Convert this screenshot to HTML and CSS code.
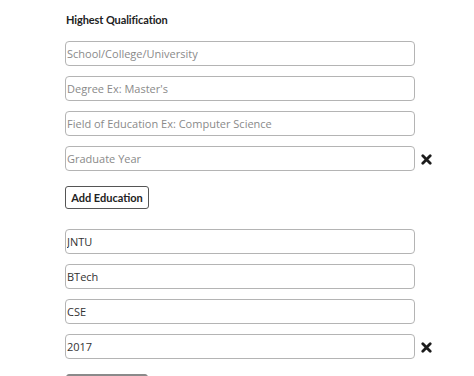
FILE: index.html
```html
<!DOCTYPE html>
<html>
<head>
<meta charset="utf-8">
<link rel="stylesheet" href="styles.css">
</head>
<body>
<div class="form">
  <h3 class="title">Highest Qualification</h3>
  <div class="group">
    <div class="row"><input class="field" placeholder="School/College/University"></div>
    <div class="row"><input class="field" placeholder="Degree Ex: Master's"></div>
    <div class="row"><input class="field" placeholder="Field of Education Ex: Computer Science"></div>
    <div class="row"><input class="field" placeholder="Graduate Year"><span class="remove"><svg width="11" height="11" viewBox="0 0 11 11"><path d="M1.8 1.8L9.2 9.2M9.2 1.8L1.8 9.2" stroke="#1c1c1c" stroke-width="2.8" stroke-linecap="round"/></svg></span></div>
  </div>
  <button class="btn">Add Education</button>
  <div class="group second">
    <div class="row"><input class="field" value="JNTU"></div>
    <div class="row"><input class="field" value="BTech"></div>
    <div class="row"><input class="field" value="CSE"></div>
    <div class="row"><input class="field" value="2017"><span class="remove"><svg width="11" height="11" viewBox="0 0 11 11"><path d="M1.8 1.8L9.2 9.2M9.2 1.8L1.8 9.2" stroke="#1c1c1c" stroke-width="2.8" stroke-linecap="round"/></svg></span></div>
  </div>
  <button class="btn gray" aria-label="Save"></button>
</div>
</body>
</html>
```
FILE: styles.css
```css
html, body { margin: 0; padding: 0; background: #fff; }
body { overflow: hidden; }
.form { padding: 13px 0 0 65px; display: flex; flex-direction: column; align-items: flex-start; }
.title { margin: 0 0 14px 1px; font-family: "Lato", "Noto Sans", sans-serif; font-weight: 700; font-size: 11px; line-height: 14px; color: #222; letter-spacing: -0.1px; }
.group { display: flex; flex-direction: column; gap: 10px; }
.group.second { margin-top: 20px; }
.row { display: flex; align-items: center; }
.field { box-sizing: border-box; width: 350px; height: 25px; margin: 0; border: 1px solid #b4b4b4; border-radius: 4px; padding: 0 1px; font-family: "Open Sans", "Noto Sans", sans-serif; font-size: 11px; color: #333; background: #fff; outline: none; }
.field::placeholder { color: #8a8a8a; }
.remove { display: flex; margin-left: 6px; margin-top: 2px; }
.btn { margin-top: 15px; box-sizing: border-box; width: 84px; height: 23px; padding: 0; border: 1px solid #555; border-radius: 3px; background: #fff; font-family: "Lato", "Noto Sans", sans-serif; font-weight: 700; font-size: 11px; color: #222; }
.btn.gray { width: 82px; margin-left: 1px; background: #8a8a8a; border-color: #8a8a8a; color: #fff; }
```
